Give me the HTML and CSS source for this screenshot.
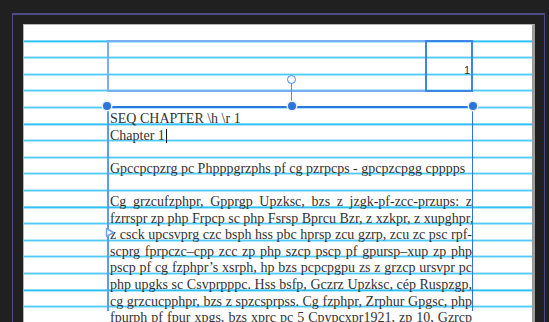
FILE: index.html
```html
<!DOCTYPE html>
<html lang="en">
<head>
    <meta charset="UTF-8">
    <meta name="viewport" content="width=device-width, initial-scale=1.0">
    <title>Chapter 1 - Editor</title>
    <link rel="stylesheet" href="styles.css">
</head>
<body>
    <div class="frame">
        <div class="page">
            <div class="header">
                <div class="header-num">1</div>
            </div>
            <div class="body">
                <!-- selection handles -->
                <span class="handle handle-left"></span>
                <span class="handle handle-mid"></span>
                <span class="handle handle-right"></span>
                <span class="rotate-stem"></span>
                <span class="rotate-handle"></span>
                <svg class="indent-mark" width="10" height="11" viewBox="0 0 10 11">
                    <path d="M1.5 1.5 L8.5 5.5 L1.5 9.5 Z" fill="#fff" stroke="#6ea8f2" stroke-width="1.5" stroke-linejoin="round"/>
                </svg>

                <div class="text">
                    <p class="line">SEQ CHAPTER \h \r 1</p>
                    <p class="line">Chapter 1<span class="caret"></span></p>
                    <p class="line">&nbsp;</p>
                    <p class="line">Gpccpcpzrg pc Phpppgrzphs pf cg pzrpcps - gpcpzcpgg cpppps</p>
                    <p class="line">&nbsp;</p>
                    <p class="line just">Cg grzcufzphpr, Gpprgp Upzksc, bzs z jzgk-pf-zcc-przups: z</p>
                    <p class="line just">fzrrspr zp php Frpcp sc php Fsrsp Bprcu Bzr, z xzkpr, z xupghpr,</p>
                    <p class="line just">z csck upcsvprg czc bsph hss pbc hprsp zcu gzrp, zcu zc psc rpf-</p>
                    <p class="line just">scprg fprpczc–cpp zcc zp php szcp pscp pf gpursp–xup zp php</p>
                    <p class="line just">pscp pf cg fzphpr’s xsrph, hp bzs pcpcpgpu zs z grzcp ursvpr pc</p>
                    <p class="line just">php upgks sc Csvprpppc. Hss bsfp, Gczrz Upzksc, cép Ruspzgp,</p>
                    <p class="line just">cg grzcucpphpr, bzs z spzcsprpss. Cg fzphpr, Zrphur Gpgsc, php</p>
                    <p class="line just">fpurph pf fpur xpgs, bzs xprc pc 5 Cpypcxpr1921, zp 10, Gzrcp</p>
                </div>
            </div>
        </div>
    </div>
</body>
</html>
```

FILE: styles.css
```css
body {
    margin: 0;
    background-color: #202020;
    height: 322px;
    overflow: hidden;
}
.frame {
    margin: 13px 0 0 12px;
    width: 512px;
    padding: 9px 9px 0 10px;
    border: 1px solid #4d4b88;
    border-top-width: 2px;
    border-bottom: none;
}
.page {
    height: 297px;
    background-color: #fff;
    border-left: 1px solid #b4b4b4;
    border-top: 1px solid #b4b4b4;
    border-right: 3px solid #9c9c9c;
    background-image: repeating-linear-gradient(to bottom,
        transparent 0, transparent 14.6px,
        #8ddbf8 14.6px, #8ddbf8 15.4px,
        #2ec0f7 15.4px, #2ec0f7 16.6px);
    background-position: 0 0.4px;
    overflow: hidden;
}
.header {
    display: flex;
    justify-content: flex-end;
    margin: 15px 0 0 83px;
    width: 364px;
    height: 48px;
    border: 2px solid #78aef2;
    border-right: none;
}
.header-num {
    width: 43px;
    margin: -2px 0;
    border: 2px solid #3c84e6;
    font-family: "Liberation Sans", Arial, sans-serif;
    font-size: 11px;
    color: #333;
    text-align: right;
    padding: 22px 1px 0 0;
}
.body {
    position: relative;
    margin: 14px 0 0 83px;
    width: 363px;
    height: 200px;
    border-top: 2px solid #2a78e0;
    border-left: 2px solid #5c9cec;
    border-right: 1px solid #2f75d6;
    padding: 3px 0 0 0;
}
.text {
    font-family: "Liberation Serif", "Times New Roman", serif;
    font-size: 14px;
    line-height: 16.6px;
    color: #333;
    overflow: hidden;
    padding-left: 1px;
}
.line {
    margin: 0;
    white-space: nowrap;
}
.just {
    text-align: justify;
    text-align-last: justify;
}
.caret {
    display: inline-block;
    width: 1px;
    height: 14px;
    margin-left: 1px;
    background-color: #111;
    vertical-align: -3px;
}
.handle {
    position: absolute;
    top: -6px;
    width: 8px;
    height: 8px;
    border-radius: 50%;
    background-color: #2c74da;
    box-shadow: 0 0 0 1.5px #e8eef8;
    z-index: 2;
}
.handle-left {
    left: -6px;
}
.handle-mid {
    left: 179px;
}
.handle-right {
    right: -5px;
}
.rotate-stem {
    position: absolute;
    left: 182px;
    top: -26px;
    width: 1px;
    height: 24px;
    background-color: #4a8ff0;
}
.rotate-handle {
    position: absolute;
    left: 178px;
    top: -33px;
    width: 7px;
    height: 7px;
    border-radius: 50%;
    border: 1.5px solid #3f8cf0;
    background-color: #fff;
    z-index: 2;
}
.indent-mark {
    position: absolute;
    left: -4px;
    top: 119px;
}
```
